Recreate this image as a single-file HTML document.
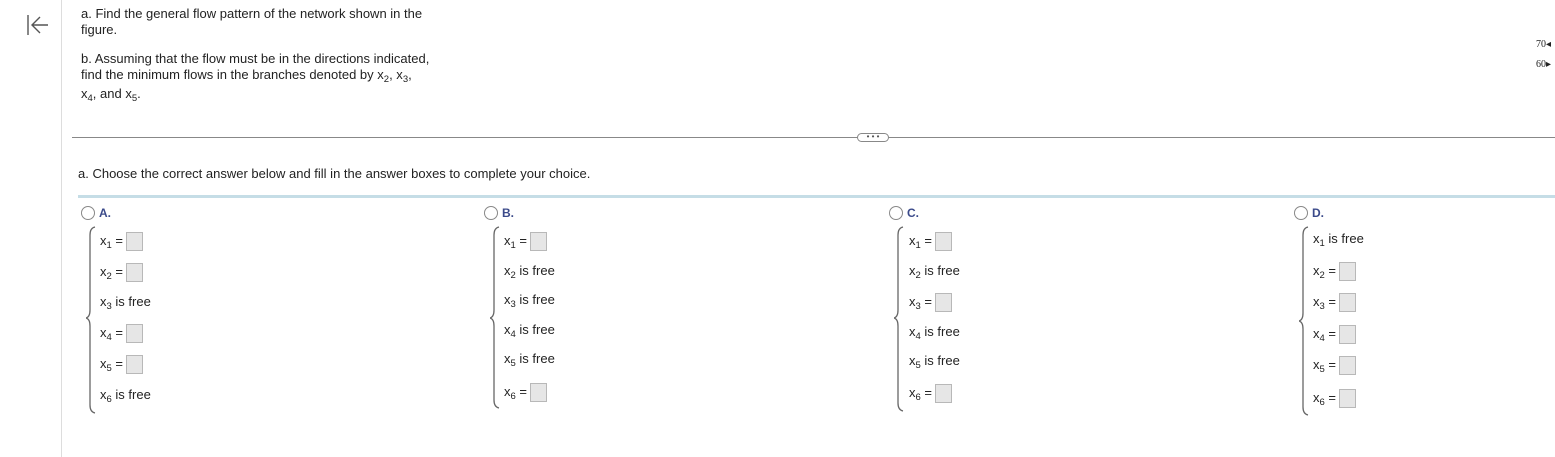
<!DOCTYPE html><html><head><style>
body{margin:0;width:1555px;height:457px;background:#fff;font-family:"Liberation Sans",Arial,sans-serif;color:#222;position:relative;overflow:hidden}
.a{position:absolute;white-space:nowrap}
.t{font-size:13px;line-height:16px}
.r{font-size:13px}
sub{font-size:9.5px;vertical-align:-3px}
.bx{display:inline-block;width:15px;height:17px;background:#e6e6e6;border:1px solid #b8b8b8;vertical-align:middle;margin-left:3px}
.rad{position:absolute;width:12px;height:12px;border:1px solid #888;border-radius:50%}
.lab{position:absolute;font-size:12px;font-weight:bold;color:#3b4a8a}
</style></head><body>
<svg class="a" style="left:26px;top:14px" width="24" height="22"><path d="M2 1 V21 M22 11 H7 M14 3 L6 11 L14 19" fill="none" stroke="#555" stroke-width="1.4"/></svg>
<div class="a" style="left:61px;top:0;width:1px;height:457px;background:#ddd"></div>
<div class="a t" style="left:81px;top:6px">a. Find the general flow pattern of the network shown in the<br>figure.</div>
<div class="a t" style="left:81px;top:51px">b. Assuming that the flow must be in the directions indicated,<br>find the minimum flows in the branches denoted by x<sub>2</sub>, x<sub>3</sub>,</div>
<div class="a t" style="left:81px;top:86px">x<sub>4</sub>, and x<sub>5</sub>.</div>
<div class="a" style="left:1536px;top:35px;font-family:'Liberation Serif',serif;font-size:10px;line-height:20px">70◂<br>60▸</div>
<div class="a" style="left:72px;top:137px;width:1483px;height:1px;background:#888"></div>
<div class="a" style="left:857px;top:133px;width:30px;height:7px;border:1px solid #888;border-radius:5px;background:#fff;font-size:8px;line-height:6px;text-align:center;color:#555">• • •</div>
<div class="a" style="left:78px;top:166px;font-size:13px">a. Choose the correct answer below and fill in the answer boxes to complete your choice.</div>
<div class="a" style="left:78px;top:195px;width:1477px;height:3px;background:#c5dde6"></div>

<div class="rad" style="left:81px;top:206px"></div><div class="lab" style="left:99px;top:206px">A.</div>
<div class="rad" style="left:484px;top:206px"></div><div class="lab" style="left:502px;top:206px">B.</div>
<div class="rad" style="left:889px;top:206px"></div><div class="lab" style="left:907px;top:206px">C.</div>
<div class="rad" style="left:1294px;top:206px"></div><div class="lab" style="left:1312px;top:206px">D.</div>

<svg class="a" style="left:86px;top:225px" width="12" height="190"><path d="M9 2 Q4 3 4 10 L4 85 Q4 92 0 93 Q4 94 4 101 L4 180 Q4 187 9 188" fill="none" stroke="#666" stroke-width="1.3"/></svg>
<svg class="a" style="left:490px;top:225px" width="12" height="190"><path d="M9 2 Q4 3 4 10 L4 85 Q4 92 0 93 Q4 94 4 101 L4 175 Q4 182 9 183" fill="none" stroke="#666" stroke-width="1.3"/></svg>
<svg class="a" style="left:894px;top:225px" width="12" height="190"><path d="M9 2 Q4 3 4 10 L4 85 Q4 92 0 93 Q4 94 4 101 L4 178 Q4 185 9 186" fill="none" stroke="#666" stroke-width="1.3"/></svg>
<svg class="a" style="left:1299px;top:225px" width="12" height="195"><path d="M9 2 Q4 3 4 10 L4 88 Q4 95 0 96 Q4 97 4 104 L4 182 Q4 189 9 190" fill="none" stroke="#666" stroke-width="1.3"/></svg>

<div class="a r" style="left:100px;top:232px">x<sub>1</sub> =<span class="bx"></span></div>
<div class="a r" style="left:100px;top:263px">x<sub>2</sub> =<span class="bx"></span></div>
<div class="a r" style="left:100px;top:294px">x<sub>3</sub> is free</div>
<div class="a r" style="left:100px;top:324px">x<sub>4</sub> =<span class="bx"></span></div>
<div class="a r" style="left:100px;top:355px">x<sub>5</sub> =<span class="bx"></span></div>
<div class="a r" style="left:100px;top:387px">x<sub>6</sub> is free</div>

<div class="a r" style="left:504px;top:232px">x<sub>1</sub> =<span class="bx"></span></div>
<div class="a r" style="left:504px;top:263px">x<sub>2</sub> is free</div>
<div class="a r" style="left:504px;top:292px">x<sub>3</sub> is free</div>
<div class="a r" style="left:504px;top:322px">x<sub>4</sub> is free</div>
<div class="a r" style="left:504px;top:351px">x<sub>5</sub> is free</div>
<div class="a r" style="left:504px;top:383px">x<sub>6</sub> =<span class="bx"></span></div>

<div class="a r" style="left:909px;top:232px">x<sub>1</sub> =<span class="bx"></span></div>
<div class="a r" style="left:909px;top:263px">x<sub>2</sub> is free</div>
<div class="a r" style="left:909px;top:293px">x<sub>3</sub> =<span class="bx"></span></div>
<div class="a r" style="left:909px;top:324px">x<sub>4</sub> is free</div>
<div class="a r" style="left:909px;top:353px">x<sub>5</sub> is free</div>
<div class="a r" style="left:909px;top:384px">x<sub>6</sub> =<span class="bx"></span></div>

<div class="a r" style="left:1313px;top:231px">x<sub>1</sub> is free</div>
<div class="a r" style="left:1313px;top:262px">x<sub>2</sub> =<span class="bx"></span></div>
<div class="a r" style="left:1313px;top:293px">x<sub>3</sub> =<span class="bx"></span></div>
<div class="a r" style="left:1313px;top:325px">x<sub>4</sub> =<span class="bx"></span></div>
<div class="a r" style="left:1313px;top:356px">x<sub>5</sub> =<span class="bx"></span></div>
<div class="a r" style="left:1313px;top:389px">x<sub>6</sub> =<span class="bx"></span></div>
</body></html>
